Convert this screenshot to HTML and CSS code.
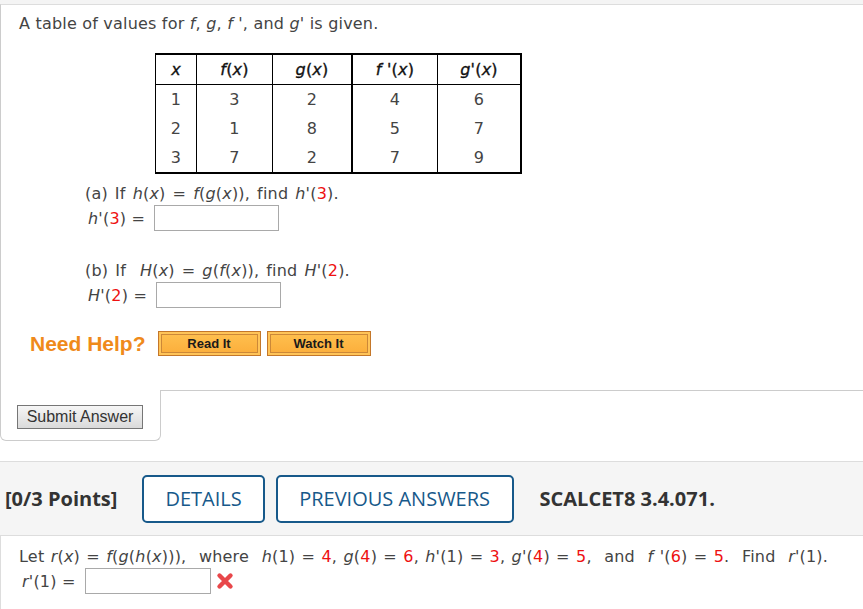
FILE: index.html
```html
<!DOCTYPE html>
<html>
<head>
<meta charset="utf-8">
<title>Question</title>
<link rel="stylesheet" href="styles.css">
</head>
<body>
<div class="top-strip"></div>
<section class="question">
  <div class="q-body">
    <p class="intro">A table of values for <i>f</i>, <i>g</i>, <i>f</i> ', and <i>g</i>' is given.</p>
    <table class="values">
      <thead>
        <tr>
          <th class="c1"><i>x</i></th>
          <th class="c2"><i>f</i>(<i>x</i>)</th>
          <th class="c3"><i>g</i>(<i>x</i>)</th>
          <th class="c4 thick"><i>f</i> '(<i>x</i>)</th>
          <th class="c5"><i>g</i>'(<i>x</i>)</th>
        </tr>
      </thead>
      <tbody>
        <tr><td>1</td><td>3</td><td>2</td><td class="thick">4</td><td>6</td></tr>
        <tr><td>2</td><td>1</td><td>8</td><td class="thick">5</td><td>7</td></tr>
        <tr><td>3</td><td>7</td><td>2</td><td class="thick">7</td><td>9</td></tr>
      </tbody>
    </table>
    <div class="part part-a">
      <p class="prompt">(a) If <i>h</i>(<i>x</i>) = <i>f</i>(<i>g</i>(<i>x</i>)), find <i>h</i>'(<span class="red">3</span>).</p>
      <p class="answer"><span class="lhs"><i>h</i>'(<span class="red">3</span>) =</span><span class="box"></span></p>
    </div>
    <div class="part part-b">
      <p class="prompt">(b) If&nbsp; <i>H</i>(<i>x</i>) = <i>g</i>(<i>f</i>(<i>x</i>)), find <i>H</i>'(<span class="red">2</span>).</p>
      <p class="answer"><span class="lhs"><i>H</i>'(<span class="red">2</span>) =</span><span class="box"></span></p>
    </div>
    <div class="help">
      <span class="need">Need Help?</span>
      <button class="help-btn read">Read It</button>
      <button class="help-btn watch">Watch It</button>
    </div>
  </div>
  <div class="submit-tab"><button class="submit">Submit Answer</button></div>
</section>
<div class="q-header">
  <span class="points">[0/3 Points]</span>
  <button class="outline details">DETAILS</button>
  <button class="outline previous">PREVIOUS ANSWERS</button>
  <span class="code">SCALCET8 3.4.071.</span>
</div>
<section class="question2">
  <p class="prompt2">Let <i>r</i>(<i>x</i>) = <i>f</i>(<i>g</i>(<i>h</i>(<i>x</i>))),&nbsp; where&nbsp; <i>h</i>(1) = <span class="red">4</span>, <i>g</i>(<span class="red">4</span>) = <span class="red">6</span>, <i>h</i>'(1) = <span class="red">3</span>, <i>g</i>'(<span class="red">4</span>) = <span class="red">5</span>,&nbsp; and&nbsp; <i>f</i> '(<span class="red">6</span>) = <span class="red">5</span>.&nbsp; Find&nbsp; <i>r</i>'(1).</p>
  <p class="answer2"><span class="lhs"><i>r</i>'(1) =</span><span class="box wide"></span><svg class="wrong" width="18" height="18" viewBox="0 0 18 18" aria-label="incorrect"><path d="M3.5 3.5 L14.5 14.5 M14.5 3.5 L3.5 14.5" stroke="#e8474a" stroke-width="4.4" stroke-linecap="round" fill="none"/></svg></p>
</section>
</body>
</html>
```

FILE: styles.css
```css
html, body {
  margin: 0;
  padding: 0;
  background: #ffffff;
}

body {
  width: 863px;
  overflow: hidden;
  font-family: "DejaVu Sans", Verdana, sans-serif;
  font-size: 16px;
  letter-spacing: 0.2px;
  color: #444444;
}

p {
  margin: 0;
}

.red {
  color: #ee1111;
}

.top-strip {
  height: 4px;
  background: #f4f4f4;
}

.q-body {
  border-top: 1px solid #dddddd;
  border-left: 1px solid #cccccc;
  border-bottom: 1px solid #cccccc;
  padding: 9px 0 34px 18px;
}

.intro {
  line-height: 20px;
}

.values {
  margin: 19px 0 0 136px;
  border-collapse: separate;
  border-spacing: 0;
  table-layout: fixed;
  width: 367px;
  border-top: 2px solid #000000;
  border-right: 2px solid #000000;
  border-bottom: 2px solid #000000;
  border-left: 1px solid #000000;
}

.values th,
.values td {
  box-sizing: border-box;
  padding: 0;
  text-align: center;
  line-height: 29px;
  border-left: 1px solid #000000;
}

.values th:first-child,
.values td:first-child {
  border-left: none;
}

.values th {
  font-weight: normal;
  color: #111111;
  -webkit-text-stroke: 0.35px #111111;
  border-bottom: 1px solid #000000;
}

.values .thick {
  border-left-width: 2px;
}

.values .c1 { width: 40px; }
.values .c2 { width: 76px; }
.values .c3 { width: 79px; }
.values .c4 { width: 86px; }
.values .c5 { width: 83px; }

.part .prompt {
  margin-left: 66px;
  line-height: 20px;
  word-spacing: 1.7px;
}

.part-a {
  margin-top: 10px;
}

.part-b {
  margin-top: 30px;
}

.answer {
  display: flex;
  align-items: center;
  margin: 1px 0 0 69px;
}

.lhs {
  margin-right: 9px;
}

.box {
  display: inline-block;
  box-sizing: border-box;
  width: 125px;
  height: 26px;
  border: 1px solid #a9a9a9;
  background: #ffffff;
}

.help {
  display: flex;
  align-items: center;
  margin: 23px 0 0 11px;
  letter-spacing: 0;
}

.need {
  font-family: "Liberation Sans", Arial, sans-serif;
  font-weight: bold;
  font-size: 21px;
  color: #ef8a1b;
  margin-right: 12px;
}

.help-btn {
  box-sizing: border-box;
  height: 25px;
  padding: 0;
  margin: 0 6px 0 0;
  border: 1px solid #c4772a;
  background: linear-gradient(#ffc150, #fbad3a);
  box-shadow: inset 0 0 0 2px #ffc458, inset 0 0 0 3px #cc8838;
  font-family: "Liberation Sans", Arial, sans-serif;
  font-weight: bold;
  font-size: 13px;
  color: #1a1a1a;
}

.help-btn.read { width: 103px; }
.help-btn.watch { width: 104px; }

.submit-tab {
  box-sizing: border-box;
  width: 161px;
  margin-top: -1px;
  padding: 15px 0 11px 16px;
  background: #ffffff;
  border-left: 1px solid #cccccc;
  border-right: 1px solid #cccccc;
  border-bottom: 1px solid #cccccc;
  border-radius: 0 0 6px 6px;
}

.submit {
  display: block;
  box-sizing: border-box;
  width: 126px;
  height: 24px;
  padding: 0;
  border: 1px solid #767676;
  background: linear-gradient(#f6f6f6, #dadada);
  font-family: "Liberation Sans", Arial, sans-serif;
  font-size: 16px;
  letter-spacing: 0;
  color: #333333;
}

.q-header {
  box-sizing: border-box;
  height: 75px;
  margin-top: 20px;
  padding-left: 5px;
  display: flex;
  align-items: center;
  background: #f5f5f5;
  border-top: 1px solid #dddddd;
  border-bottom: 1px solid #dddddd;
  font-family: "Open Sans", sans-serif;
  font-size: 20px;
  letter-spacing: 0;
  color: #333333;
}

.points,
.code {
  font-weight: bold;
}

.outline {
  box-sizing: border-box;
  height: 48px;
  padding: 0 21px;
  border: 2px solid #17598a;
  border-radius: 5px;
  background: #ffffff;
  font-family: "Open Sans", sans-serif;
  font-size: 20px;
  color: #17598a;
}

.details {
  margin-left: 25px;
}

.previous {
  margin-left: 11px;
  padding: 0 21.5px;
}

.code {
  margin-left: 26px;
}

.question2 {
  border-left: 1px solid #dddddd;
  padding: 11px 0 20px 18px;
}

.prompt2 {
  line-height: 20px;
  word-spacing: 1px;
}

.answer2 {
  display: flex;
  align-items: center;
  margin: 1px 0 0 3px;
}

.box.wide {
  width: 126px;
}

.wrong {
  margin-left: 5px;
}
```
